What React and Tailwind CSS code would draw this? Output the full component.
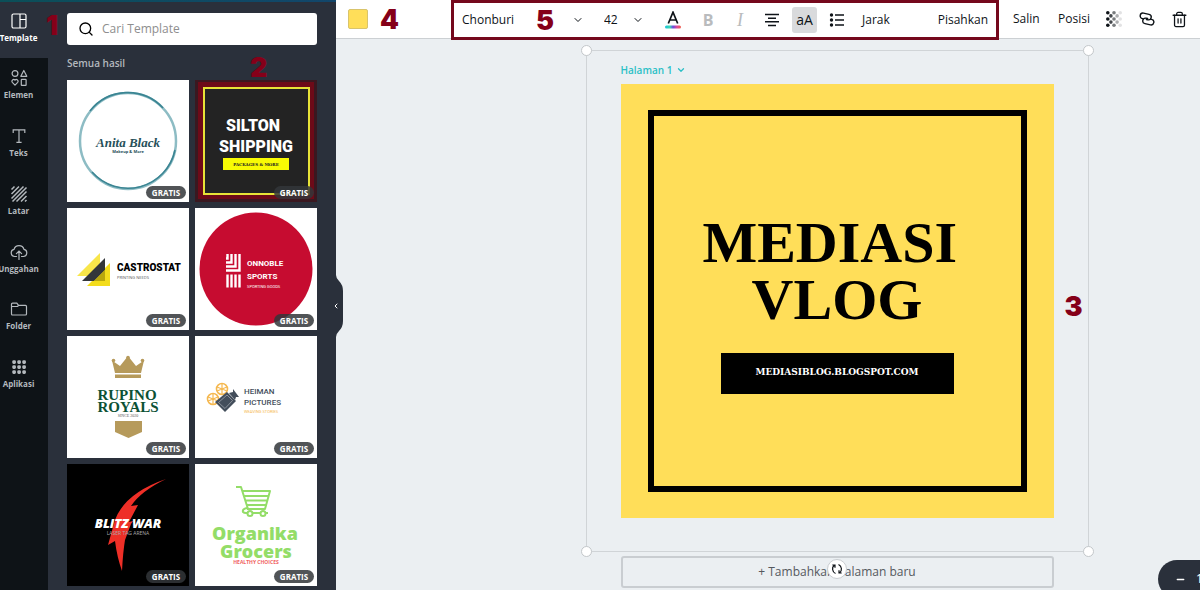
import React from 'react';
import { ChevronDown, ChevronLeft, Minus, Search, Trash2 } from 'lucide-react';

const navItems = [
  { id: 'template', label: 'Template' },
  { id: 'elemen', label: 'Elemen' },
  { id: 'teks', label: 'Teks' },
  { id: 'latar', label: 'Latar' },
  { id: 'unggahan', label: 'Unggahan' },
  { id: 'folder', label: 'Folder' },
  { id: 'aplikasi', label: 'Aplikasi' },
];

const NavIcon = ({ id }) => {
  const common = {
    viewBox: '0 0 18 18',
    className: 'h-[18px] w-[18px]',
    fill: 'none',
    stroke: 'currentColor',
    strokeWidth: 1.2,
    'aria-hidden': true,
  };

  switch (id) {
    case 'template':
      return (
        <svg {...common}>
          <rect x="2" y="2" width="14" height="14" rx="1.5" />
          <path d="M10 2v14M10 7.5h6" />
        </svg>
      );
    case 'elemen':
      return (
        <svg {...common}>
          <circle cx="5" cy="4.5" r="2.9" />
          <path d="M13.8 1.5l3 5.8h-6z" strokeLinejoin="round" />
          <path d="M5 16.2L2.3 13.4a1.7 1.7 0 0 1 2.7-2.2 1.7 1.7 0 0 1 2.7 2.2z" strokeLinejoin="round" />
          <rect x="11.3" y="10.4" width="4.8" height="6" rx="0.5" />
        </svg>
      );
    case 'teks':
      return (
        <svg {...common}>
          <path d="M3.2 6V2.8h11.6V6M9 2.8v12.6M6.4 15.4h5.2" />
        </svg>
      );
    case 'latar':
      return (
        <svg {...common} strokeWidth={1.5}>
          <path d="M1.5 4.5l3-3M1.5 9l7.5-7.5M1.5 13.5l12-12M2.5 16.5l14-14M6.5 16.5l10-10M11 16.5l5.5-5.5M15 16.5l1.5-1.5" />
        </svg>
      );
    case 'unggahan':
      return (
        <svg {...common}>
          <path d="M6.5 13.5H4.6A3.6 3.6 0 0 1 4 6.4a5.2 5.2 0 0 1 10 0 3.6 3.6 0 0 1-.6 7.1h-1.9" strokeLinecap="round" />
          <path d="M9 16.5V8.2M6.4 10.6L9 8l2.6 2.6" strokeLinecap="round" />
        </svg>
      );
    case 'folder':
      return (
        <svg {...common}>
          <path d="M1.5 14V4.2a1 1 0 0 1 1-1h4.3l1.8 2.2h6.9a1 1 0 0 1 1 1V14a1 1 0 0 1-1 1h-13a1 1 0 0 1-1-1z" />
          <path d="M1.5 6.5h6l1-1" />
        </svg>
      );
    default:
      return (
        <svg {...common} fill="currentColor" stroke="none">
          {[2.3, 7.3, 12.3].map((y) =>
            [2.3, 7.3, 12.3].map((x) => <rect key={`${x}-${y}`} x={x} y={y} width="3.6" height="3.6" rx="1.3" />)
          )}
        </svg>
      );
  }
};

const LogoAnita = () => (
  <svg viewBox="0 0 122 122" className="w-full bg-white">
    <circle cx="61" cy="61" r="48" fill="none" stroke="#8dbcc4" strokeWidth="2.5" />
    <path d="M23 31A48 48 0 0 1 96 28M108 70A48 48 0 0 1 25 92" fill="none" stroke="#3b8593" strokeWidth="1.6" />
    <text x="61" y="67" textAnchor="middle" fontSize="13" className="fill-[#27505a] font-['Liberation_Serif',serif] font-bold italic">Anita Black</text>
    <text x="61" y="73" textAnchor="middle" fontSize="4" className="fill-[#27505a] font-['Open_Sans',sans-serif] font-bold">Makeup &amp; More</text>
  </svg>
);

const LogoSilton = () => (
  <svg viewBox="0 0 122 122" className="w-full">
    <rect width="122" height="122" fill="#3a1820" />
    <rect x="3" y="2" width="116" height="117" fill="#6d0a18" />
    <rect x="8" y="7" width="107" height="108" fill="#232323" />
    <rect x="9" y="8" width="105" height="106" fill="none" stroke="#e7e337" strokeWidth="2" />
    <text x="58" y="51" textAnchor="middle" fontSize="16" className="fill-white font-['Roboto',sans-serif] font-black">SILTON</text>
    <text x="61" y="72" textAnchor="middle" fontSize="16" className="fill-white font-['Roboto',sans-serif] font-black">SHIPPING</text>
    <rect x="28" y="78" width="66" height="12" fill="#f8fb04" />
    <text x="61" y="86" textAnchor="middle" fontSize="4" className="fill-[#232323] font-['DejaVu_Serif',serif] font-bold">PACKAGES &amp; MORE</text>
  </svg>
);

const LogoCastrostat = () => (
  <svg viewBox="0 0 122 122" className="w-full bg-white">
    <path d="M10 68L33 45V68z" fill="#f8e64a" />
    <path d="M20 78L43 55V78z" fill="#f3dc1c" />
    <path d="M15 73L38 50V62L27 73z" fill="#33363a" />
    <path d="M27 73L38 62V73z" fill="#b9a60d" />
    <text x="50" y="63" fontSize="10" className="fill-black font-['Roboto',sans-serif] font-black">CASTROSTAT</text>
    <text x="50" y="71" fontSize="4" className="fill-[#555] font-['Open_Sans',sans-serif]">PRINTING NEEDS</text>
  </svg>
);

const LogoOnnoble = () => (
  <svg viewBox="0 0 122 122" className="w-full bg-white">
    <circle cx="61" cy="61" r="56.5" fill="#c60c30" />
    <path
      d="M32.500 46v4.500H31M36.500 46v8.500H31M40.500 46v12.500H31M44.500 46v16.500H31M32.500 66.500v13M36.500 66.500v13M40.500 66.500v13M44.500 66.500v13"
      fill="none"
      stroke="white"
      strokeWidth="2.4"
    />
    <text x="52" y="58" fontSize="8" className="fill-white font-['Roboto',sans-serif] font-bold">ONNOBLE</text>
    <text x="52" y="71" fontSize="8" className="fill-white font-['Roboto',sans-serif] font-bold">SPORTS</text>
    <text x="52" y="80" fontSize="4" className="fill-white font-['Roboto',sans-serif]">SPORTING GOODS</text>
  </svg>
);

const LogoRupino = () => (
  <svg viewBox="0 0 122 122" className="w-full bg-white">
    <path d="M48 37L45 24.500l8 5.500 8-10 8 10 8-5.500L74 37zM48 38.500h26V42H48z" fill="#b69a5b" />
    <circle cx="46.5" cy="24.5" r="1.8" fill="#b69a5b" />
    <circle cx="61" cy="21.5" r="1.8" fill="#b69a5b" />
    <circle cx="75.5" cy="24.5" r="1.8" fill="#b69a5b" />
    <text x="60" y="64" textAnchor="middle" fontSize="15" className="fill-[#0c5135] font-['Liberation_Serif',serif] font-bold">RUPINO</text>
    <text x="61" y="76" textAnchor="middle" fontSize="15" className="fill-[#0c5135] font-['Liberation_Serif',serif] font-bold">ROYALS</text>
    <text x="61" y="81" textAnchor="middle" fontSize="4" className="fill-[#555] font-['Liberation_Serif',serif]">SINCE 2020</text>
    <path d="M48 85h27v11l-13.500 6L48 96z" fill="#b69a5b" />
  </svg>
);

const LogoHeiman = () => (
  <svg viewBox="0 0 122 122" className="w-full bg-white">
    <g fill="none" stroke="#f5b84f" strokeWidth="1.6">
      <circle cx="27" cy="53" r="5.5" />
      <circle cx="18" cy="63" r="5.5" />
      <path d="M27 48v10M22 51l10 4M32 51l-10 4M18 58v10M13 61l10 4M23 61l-10 4" strokeWidth="1.2" />
    </g>
    <path d="M20 66L32 56l9 9-11 11z" fill="#434e5b" />
    <path d="M34 57l4-1 0-3 6 8-3 0-1 3z" fill="#434e5b" />
    <path d="M23.500 66.500l8.500-7.500 5.500 5.500-7.500 8z" fill="none" stroke="#a7adb4" strokeWidth="0.7" />
    <text x="49" y="58" fontSize="8" className="fill-[#434e5b] font-['Roboto',sans-serif] font-medium">HEIMAN</text>
    <text x="49" y="69" fontSize="8" className="fill-[#434e5b] font-['Roboto',sans-serif] font-medium">PICTURES</text>
    <text x="49" y="77" fontSize="4" className="fill-[#f5b84f] font-['Roboto',sans-serif]">WEAVING STORIES</text>
  </svg>
);

const LogoBlitz = () => (
  <svg viewBox="0 0 122 122" className="w-full bg-black">
    <path d="M99 15Q58 29 48 56L41 81l7-4Q50 93 55 107 56 88 58 76l6-16 2-3-4 1 9-17-7 1Q74 27 99 15z" fill="#ee2f27" />
    <text x="61" y="64" textAnchor="middle" fontSize="13" className="fill-white font-['Open_Sans',sans-serif] font-extrabold italic">BLITZ WAR</text>
    <text x="61" y="71" textAnchor="middle" fontSize="5" className="fill-[#aaa] font-['Open_Sans',sans-serif]">LASER TAG ARENA</text>
  </svg>
);

const LogoOrganika = () => (
  <svg viewBox="0 0 122 122" className="w-full bg-white">
    <g fill="none" stroke="#93dd68" strokeWidth="2" strokeLinejoin="round">
      <path d="M41 23h5l7 22M47 27h28l-5 18H52M48 32h25M50 36.500h22M51 41h20M52 44q-5 1-4 4 1 1 3 1h22" />
      <circle cx="55" cy="49.5" r="2.5" fill="white" />
      <circle cx="68" cy="49.5" r="2.5" fill="white" />
    </g>
    <text x="60" y="76" textAnchor="middle" fontSize="18" className="fill-[#93dd68] font-['Open_Sans',sans-serif] font-extrabold">Organika</text>
    <text x="61" y="94" textAnchor="middle" fontSize="18" className="fill-[#93dd68] font-['Open_Sans',sans-serif] font-extrabold">Grocers</text>
    <text x="61" y="100" textAnchor="middle" fontSize="5" className="fill-[#f0625f] font-['Open_Sans',sans-serif] font-bold">HEALTHY CHOICES</text>
  </svg>
);

const templates = [
  { name: 'Anita Black', Logo: LogoAnita },
  { name: 'Silton Shipping', Logo: LogoSilton },
  { name: 'Castrostat', Logo: LogoCastrostat },
  { name: 'Onnoble Sports', Logo: LogoOnnoble },
  { name: 'Rupino Royals', Logo: LogoRupino },
  { name: 'Heiman Pictures', Logo: LogoHeiman },
  { name: 'Blitz War', Logo: LogoBlitz },
  { name: 'Organika Grocers', Logo: LogoOrganika },
];

const Marker = ({ children, className }) => (
  <span className={`pointer-events-none absolute font-['Inter',sans-serif] text-[27px] leading-5 font-black text-[#850019] ${className}`}>
    {children}
  </span>
);

const SideNav = () => (
  <nav className="w-12 shrink-0 bg-[#0e1317]">
    <ul className="grid h-[404px] grid-rows-7">
      {navItems.map((item, i) => (
        <li key={item.id} className={i === 0 ? 'bg-[#2a303b] text-white' : 'text-[#b4b9be]'}>
          <button className="flex h-full w-[37px] flex-col items-center justify-end gap-[2px] pb-[14px]">
            <NavIcon id={item.id} />
            <span className="text-[8px] leading-3 font-bold">{item.label}</span>
          </button>
        </li>
      ))}
    </ul>
  </nav>
);

const TemplatePanel = () => (
  <aside className="relative w-72 shrink-0 bg-[#2a303b] px-[19px] pt-[13px]">
    <Marker className="-left-[2px] top-4">1</Marker>
    <label className="flex h-8 items-center gap-2 rounded-[3px] bg-white px-[11px]">
      <Search className="h-4 w-4 text-black" strokeWidth={2} />
      <input
        type="text"
        aria-label="Cari Template"
        placeholder="Cari Template"
        className="min-w-0 flex-1 text-xs text-gray-700 outline-none placeholder:text-[#8e8e8e]"
      />
    </label>
    <div className="relative mt-[10px] mb-[9px]">
      <h2 className="text-[10px] leading-4 font-semibold text-[#b4b9be]">Semua hasil</h2>
      <Marker className="left-[183px] top-[3px]">2</Marker>
    </div>
    <div className="grid grid-cols-2 gap-[6px]">
      {templates.map(({ name, Logo }) => (
        <button key={name} aria-label={name} className="relative block">
          <Logo />
          <span className="absolute right-[3px] bottom-[3px] w-10 rounded-full bg-[#323639]/85 text-center text-[8px] leading-[13px] font-bold text-white">
            GRATIS
          </span>
        </button>
      ))}
    </div>
    <button
      aria-label="Tutup panel"
      className="absolute -right-[7px] top-[275px] z-10 flex h-[62px] w-[14px] items-center justify-center text-white"
    >
      <svg viewBox="0 0 14 62" className="absolute inset-0 h-full w-full" aria-hidden="true">
        <path d="M7 0q0 3 3 6 4 4 4 10v30q0 6-4 10-3 3-3 6H0V0z" fill="#2a303b" />
      </svg>
      <ChevronLeft className="relative h-2 w-2" strokeWidth={3} />
    </button>
  </aside>
);

const TextColorIcon = () => (
  <svg viewBox="0 0 18 18" className="h-[18px] w-[18px]" aria-hidden="true">
    <defs>
      <linearGradient id="rainbow">
        <stop offset="0" stopColor="#17c3e0" />
        <stop offset="0.3" stopColor="#3fd8b0" />
        <stop offset="0.5" stopColor="#6a4be0" />
        <stop offset="0.75" stopColor="#e04b9a" />
        <stop offset="1" stopColor="#f0604b" />
      </linearGradient>
    </defs>
    <path d="M4.300 12.500L9 1.200l4.700 11.300M6 9h6" fill="none" stroke="#0e1318" strokeWidth="1.7" />
    <rect x="1" y="14.5" width="16" height="3" rx="1.5" fill="url(#rainbow)" />
  </svg>
);

const AlignIcon = () => (
  <svg viewBox="0 0 16 16" className="h-4 w-4" fill="none" stroke="#0e1318" strokeWidth="1.5" aria-hidden="true">
    <path d="M1 2.500h14M4 6.200h8M1 9.800h14M4 13.500h8" />
  </svg>
);

const ListIcon = () => (
  <svg viewBox="0 0 16 16" className="h-4 w-4" fill="none" stroke="#0e1318" strokeWidth="1.3" aria-hidden="true">
    <path d="M6 3h9M6 8h9M6 13h9" />
    <g fill="#0e1318" stroke="none">
      <circle cx="2.5" cy="3" r="1.7" />
      <circle cx="2.5" cy="8" r="1.7" />
      <circle cx="2.5" cy="13" r="1.7" />
    </g>
  </svg>
);

const TransparencyIcon = () => (
  <svg viewBox="0 0 16 16" className="h-4 w-4" fill="#0e1318" aria-hidden="true">
    {[0, 1, 2, 3, 4].map((col) =>
      [0, 1, 2, 3, 4].map((row) =>
        (col + row) % 2 === 0 ? (
          <circle key={`${col}-${row}`} cx={1.8 + col * 3.1} cy={1.8 + row * 3.1} r="1.8" opacity={1 - col * 0.22} />
        ) : null
      )
    )}
  </svg>
);

const LinkIcon = () => (
  <svg viewBox="0 0 16 16" className="h-4 w-4" fill="none" stroke="#0e1318" strokeWidth="1.4" strokeLinecap="round" aria-hidden="true">
    <g transform="rotate(12 8 8)">
      <path d="M4 8.600H3.400a2.800 2.800 0 0 1 0-5.600h5.600a2.800 2.800 0 0 1 0 5.600H7.500" />
      <path d="M12 7.400h.6a2.800 2.800 0 0 1 0 5.600H7a2.800 2.800 0 0 1 0-5.600h1.500" />
    </g>
  </svg>
);

const Toolbar = () => (
  <header className="flex h-[39px] shrink-0 items-center border-b border-[#ccd0d3] bg-white text-xs text-[#0e1318]">
    <div className="relative flex flex-1 items-center pl-3">
      <button aria-label="Warna latar" className="h-5 w-5 rounded-xs border border-[#d9c46b] bg-[#ffde59]" />
      <Marker className="left-11 top-px">4</Marker>
    </div>
    <div className="relative z-10 flex h-10 w-[548px] shrink-0 items-center self-start border-[3px] border-[#75081c] px-2">
      <div className="relative flex w-[122px] items-center">
        <select aria-label="Font" defaultValue="Chonburi" className="w-full appearance-none outline-none">
          <option>Chonburi</option>
        </select>
        <ChevronDown className="pointer-events-none absolute right-0 h-3 w-3" />
        <Marker className="left-[74px] -top-px">5</Marker>
      </div>
      <div className="relative ml-5 flex w-10 items-center">
        <select aria-label="Ukuran font" defaultValue="42" className="w-full appearance-none outline-none">
          <option>42</option>
        </select>
        <ChevronDown className="pointer-events-none absolute right-0 h-3 w-3" />
      </div>
      <button aria-label="Warna teks" className="ml-5"><TextColorIcon /></button>
      <button aria-label="Tebal" className="ml-5 w-3 text-base font-bold text-[#b9bbbd]">B</button>
      <button aria-label="Miring" className="ml-5 w-3 font-['Liberation_Serif',serif] text-lg text-[#b9bbbd] italic">I</button>
      <button aria-label="Perataan" className="ml-[18px]"><AlignIcon /></button>
      <button aria-label="Huruf besar" className="ml-3 h-[26px] w-[25px] rounded-[3px] bg-[#d9dadc] text-sm">aA</button>
      <button aria-label="Daftar" className="ml-3"><ListIcon /></button>
      <button className="ml-[17px]">Jarak</button>
      <button className="ml-auto">Pisahkan</button>
    </div>
    <div className="flex w-[201px] shrink-0 items-center justify-between pr-3 pl-[14px]">
      <button>Salin</button>
      <button className="pl-[2px]">Posisi</button>
      <button aria-label="Transparansi"><TransparencyIcon /></button>
      <button aria-label="Tautan"><LinkIcon /></button>
      <button aria-label="Hapus"><Trash2 className="h-[17px] w-[17px]" strokeWidth={1.8} /></button>
    </div>
  </header>
);

const Handle = ({ className }) => (
  <span className={`absolute h-[11px] w-[11px] rounded-full border border-[#c3c7ca] bg-white ${className}`} />
);

const Canvas = () => (
  <main className="relative flex-1 overflow-hidden bg-[#ebeff2] pt-[11px] pl-[138px]">
    <div className="relative mx-auto w-[503px] border border-[#d0d4d7] px-[34px] pt-[11px] pb-[33px]">
      <Handle className="-left-[6px] -top-[6px]" />
      <Handle className="-right-[6px] -top-[6px]" />
      <Handle className="-left-[6px] -bottom-[6px]" />
      <Handle className="-right-[6px] -bottom-[6px]" />
      <button className="flex items-center gap-1 text-[10px] leading-4 font-semibold text-[#2abfc6]">
        Halaman 1
        <ChevronDown className="h-[10px] w-[10px]" strokeWidth={3} />
      </button>
      <div className="mt-[6px] bg-[#ffde59] px-[27px] py-[26px]">
        <div className="flex h-[382px] flex-col items-center border-[6px] border-black pt-[98px]">
          <h1 className="text-center font-['Liberation_Serif',serif] text-[58px] leading-[57px] font-bold text-black">
            MEDIASI&nbsp;
            <br />
            VLOG
          </h1>
          <p className="mt-[25px] flex h-[41px] w-[233px] items-center justify-center bg-black pb-[2px] font-['DejaVu_Serif',serif] text-[9px] font-bold text-white">
            MEDIASIBLOG.BLOGSPOT.COM
          </p>
        </div>
      </div>
      <Marker className="right-[5px] top-[246px]">3</Marker>
    </div>
    <div className="relative mx-auto mt-1 w-[433px]">
      <button className="h-8 w-full rounded-[3px] border-2 border-[#c9cdd1] text-xs text-[#55595e]">
        + Tambahkan halaman baru
      </button>
      <button
        aria-label="Putar"
        className="absolute left-1/2 top-[3px] flex h-5 w-5 -translate-x-1/2 items-center justify-center rounded-full border border-[#c9cdd1] bg-white"
      >
        <svg viewBox="0 0 12 12" className="h-3 w-3" fill="none" stroke="#0e1318" strokeWidth="1.2" aria-hidden="true">
          <path d="M4.500 10.500A5 5 0 0 1 3.500 2M1.300 2h2.700v2.700M7.500 1.500A5 5 0 0 1 8.500 10M10.700 10H8V7.300" />
        </svg>
      </button>
    </div>
    <div className="absolute -right-10 -bottom-2 flex h-[38px] w-[82px] items-center gap-[10px] rounded-full bg-[#2a303b] pl-[17px] text-xs text-white">
      <button aria-label="Perkecil"><Minus className="h-[11px] w-[11px]" strokeWidth={3} /></button>
      <span>100%</span>
    </div>
  </main>
);

const App = () => (
  <div className="relative flex h-screen overflow-hidden font-['Open_Sans',sans-serif]">
    <div className="absolute top-0 left-0 z-10 h-0.5 w-[336px] bg-linear-to-r from-[#0b4f58] to-[#12466b]" />
    <SideNav />
    <TemplatePanel />
    <div className="flex min-w-0 flex-1 flex-col">
      <Toolbar />
      <Canvas />
    </div>
  </div>
);

export default App;
